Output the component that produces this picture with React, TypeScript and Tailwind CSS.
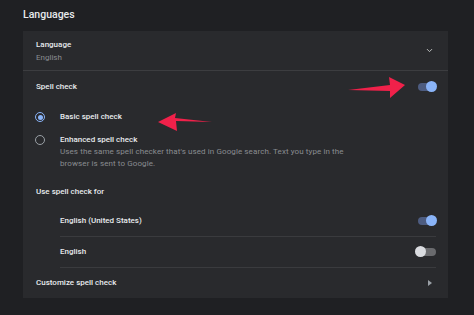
import { ChevronDown } from 'lucide-react'

function Toggle({ on }: { on: boolean }) {
  return (
    <div className="relative w-[20px] h-[10px] flex items-center">
      <div className={`w-[18px] h-[8px] rounded-full ml-[2px] ${on ? 'bg-[#4d5c80]' : 'bg-[#6a6b6e]'}`} />
      <div
        className={`absolute top-[-1px] w-[11px] h-[11px] rounded-full ${on ? 'right-[-1px] bg-[#8ab4f8]' : 'left-[-1px] bg-[#dadce0]'}`}
      />
    </div>
  )
}

function Radio({ checked }: { checked: boolean }) {
  return (
    <div
      className={`w-[10px] h-[10px] rounded-full border-[1.5px] flex items-center justify-center shrink-0 ${
        checked ? 'border-[#8ab4f8]' : 'border-[#9aa0a6]'
      }`}
    >
      {checked && <div className="w-[5px] h-[5px] rounded-full bg-[#8ab4f8]" />}
    </div>
  )
}

export default function App() {
  return (
    <div
      className="relative w-[474px] h-[315px] bg-[#1f2023] text-[#e8eaed] overflow-hidden"
      style={{ fontFamily: 'Roboto, "Liberation Sans", sans-serif' }}
    >
      <div className="pl-[23px] pt-[9px] pr-[26px]">
        <h1 className="text-[10.5px] h-[22px] leading-[12px] font-medium">Languages</h1>

        <div className="bg-[#292a2d] text-[8px] font-medium">
          {/* Language row */}
          <div className="h-[40px] flex items-center justify-between pl-[13px] pr-[14px] border-b border-[#3c3d40]">
            <div className="flex flex-col gap-[2px] pt-[1px]">
              <span className="leading-[11px]">Language</span>
              <span className="leading-[11px] text-[#8a8d91] font-normal">English</span>
            </div>
            <ChevronDown className="w-[9px] h-[9px] text-[#c4c7c5]" strokeWidth={2.5} />
          </div>

          {/* Spell check row */}
          <div className="h-[32px] flex items-center justify-between pl-[13px] pr-[12px]">
            <span>Spell check</span>
            <Toggle on />
          </div>

          <div className="pl-[12px] flex flex-col">
            <div className="h-[28px] flex items-center gap-[15px]">
              <Radio checked />
              <span>Basic spell check</span>
            </div>
            <div className="flex gap-[15px] pt-[3px]">
              <div className="pt-[1px]">
                <Radio checked={false} />
              </div>
              <div className="flex flex-col">
                <span className="leading-[12px]">Enhanced spell check</span>
                <span className="leading-[12px] text-[8px] tracking-[0.1px] text-[#8a8d91] font-normal">
                  Uses the same spell checker that&apos;s used in Google search. Text you type in the
                  <br />
                  browser is sent to Google.
                </span>
              </div>
            </div>
          </div>

          <div className="h-[26px] flex items-end pl-[13px] mt-[3px]">
            <span className="leading-[12px] pb-[1px]">Use spell check for</span>
          </div>

          <div className="pl-[37px] pr-[12px] mt-[7px]">
            <div className="h-[31px] flex items-center justify-between border-b border-[#3a3b3e]">
              <span>English (United States)</span>
              <Toggle on />
            </div>
            <div className="h-[31px] flex items-center justify-between border-b border-[#3a3b3e]">
              <span>English</span>
              <Toggle on={false} />
            </div>
          </div>

          <div className="h-[30px] flex items-center justify-between pl-[13px] pr-[16px]">
            <span>Customize spell check</span>
            <div className="w-0 h-0 border-y-[3px] border-y-transparent border-l-[4px] border-l-[#9aa0a6]" />
          </div>
        </div>
      </div>

      {/* annotation arrows */}
      <svg className="absolute left-0 top-0 pointer-events-none" width="474" height="315">
        <polygon points="348,90 390,85 389,77 405,85 390,98 390,91" fill="#f0214a" />
        <polygon points="212,122 176,121 177,131 158,122 176,113 175,118" fill="#f0214a" />
      </svg>
    </div>
  )
}
